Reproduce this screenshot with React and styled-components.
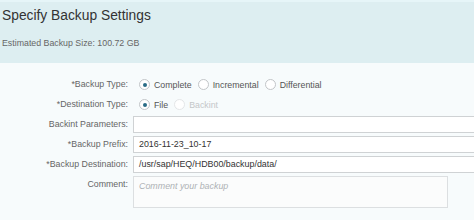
import React from 'react'
import styled, { createGlobalStyle } from 'styled-components'

const Global = createGlobalStyle`
  html, body {
    margin: 0;
    padding: 0;
    background: #f7fbfc;
    font-family: "Liberation Sans", Arial, sans-serif;
    overflow: hidden;
  }
`

const Page = styled.div`
  width: 474px;
  height: 220px;
  overflow: hidden;
  background: #f7fbfc;
`

const Header = styled.div`
  height: 63px;
  box-sizing: border-box;
  background: #ddeef1;
  border-top: 2px solid #e6f5f8;
  padding: 5px 2px 0;
`

const Title = styled.h1`
  margin: 0;
  font-size: 13.8px;
  font-weight: normal;
  color: #333;
  line-height: 18px;
`

const Sub = styled.div`
  margin-top: 12px;
  font-size: 8.8px;
  color: #666;
  line-height: 12px;
`

const Form = styled.div`
  display: grid;
  grid-template-columns: 128px 1fr;
  column-gap: 5px;
  row-gap: 3px;
  padding-top: 13px;
`

const Label = styled.label`
  justify-self: end;
  align-self: ${p => (p.top ? 'start' : 'center')};
  padding-top: ${p => (p.top ? '3px' : '0')};
  font-size: 8.8px;
  color: #666;
  white-space: nowrap;
  line-height: 11px;
`

const Field = styled.div`
  display: flex;
  align-items: center;
  height: 17px;
  min-width: 0;
`

const RadioItem = styled.span`
  display: flex;
  align-items: center;
  margin-left: 6px;
  font-size: 8.8px;
  color: ${p => (p.disabled ? '#c4c7c9' : '#555')};
`

const Circle = styled.span`
  width: 9px;
  height: 9px;
  border-radius: 50%;
  border: 1px solid ${p => (p.disabled ? '#e4e6e8' : '#c2c5c8')};
  background: #fff;
  display: flex;
  align-items: center;
  justify-content: center;
  margin-right: 4px;
  &::after {
    content: '';
    width: 4px;
    height: 4px;
    border-radius: 50%;
    background: ${p => (p.checked ? '#2a6c86' : 'transparent')};
  }
`

const Input = styled.div`
  box-sizing: border-box;
  flex-shrink: 0;
  width: 360px;
  height: 17px;
  border: 1px solid #cfd2d4;
  background: #fff;
  padding: 0 5px;
  font-size: 8.9px;
  color: #333;
  line-height: 15px;
  white-space: nowrap;
`

const TextArea = styled.div`
  box-sizing: border-box;
  width: 315px;
  height: 32px;
  border: 1px solid #dcdfe1;
  background: #fbfcfc;
  padding: 4px 5px;
  font-size: 8.9px;
  font-style: italic;
  color: #aeb2b5;
`

const Radio = ({ label, checked, disabled }) => (
  <RadioItem disabled={disabled}>
    <Circle checked={checked} disabled={disabled} />
    {label}
  </RadioItem>
)

export default function App() {
  return (
    <Page>
      <Global />
      <Header>
        <Title>Specify Backup Settings</Title>
        <Sub>Estimated Backup Size: 100.72 GB</Sub>
      </Header>
      <Form>
        <Label>*Backup Type:</Label>
        <Field>
          <Radio label="Complete" checked />
          <Radio label="Incremental" />
          <Radio label="Differential" />
        </Field>
        <Label>*Destination Type:</Label>
        <Field>
          <Radio label="File" checked />
          <Radio label="Backint" disabled />
        </Field>
        <Label>Backint Parameters:</Label>
        <Field>
          <Input />
        </Field>
        <Label>*Backup Prefix:</Label>
        <Field>
          <Input>2016-11-23_10-17</Input>
        </Field>
        <Label>*Backup Destination:</Label>
        <Field>
          <Input>/usr/sap/HEQ/HDB00/backup/data/</Input>
        </Field>
        <Label top>Comment:</Label>
        <TextArea>Comment your backup</TextArea>
      </Form>
    </Page>
  )
}
